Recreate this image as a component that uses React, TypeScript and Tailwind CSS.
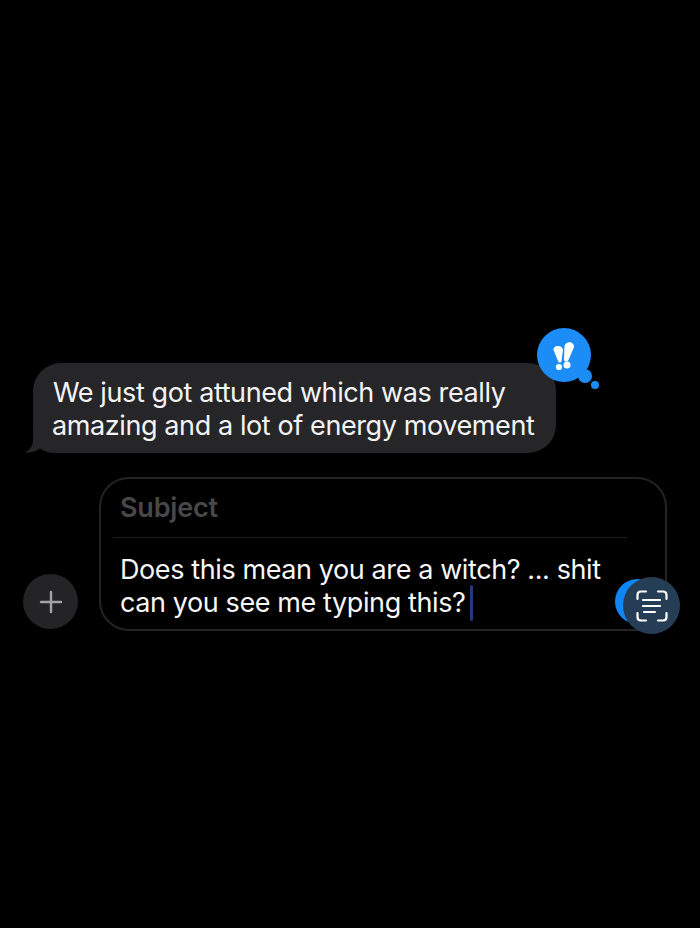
export default function App() {
  return (
    <div className="min-h-[928px] w-[700px] bg-black pt-[363px] text-white" style={{ fontFamily: "Inter, 'Noto Sans', sans-serif" }}>
      <div className="relative ml-[33px] h-[90px] w-[523px] rounded-[28px] bg-[#262629] pl-[20px] pt-[12.500px] text-[27px] leading-[33px] tracking-[-0.4px] text-[#f4f4f5]">
        <svg className="absolute left-[-8px] top-[66px]" width="34" height="24" viewBox="0 0 34 24">
          <path d="M8 0 L8 11 C8 17 5 21 0 23.500 C5 24.500 11 22 15 19.500 C19 22 24 24 30 24 L34 24 L34 0 Z" fill="#262629" />
        </svg>
        <div className="relative whitespace-nowrap">We just got attuned which was really</div>
        <div className="relative -ml-px whitespace-nowrap">amazing and a lot of energy movement</div>
        <div className="absolute left-[504px] top-[-35px] h-[54px] w-[54px] rounded-full bg-[#1c8cf7]">
          <svg width="54" height="54" viewBox="0 0 54 54" className="absolute left-0 top-0">
            <g fill="#fff">
              <path d="M16.500 22 C16 17 25.500 16.500 26 22 L24.500 33 C24 35 21.500 35 21 33 Z" />
              <circle cx="22" cy="39" r="3.100" />
              <path d="M27.500 18 C28.500 12.500 37.500 13 37 19 L31.500 32 C30.500 34.500 27 34 27 31.500 Z" />
              <circle cx="30" cy="37" r="3.500" />
            </g>
          </svg>
        </div>
        <div className="absolute left-[545px] top-[6px] h-[14px] w-[14px] rounded-full bg-[#1c8cf7]" />
        <div className="absolute left-[558px] top-[18px] h-[8px] w-[8px] rounded-full bg-[#1c8cf7]" />
      </div>
      <div className="ml-[23px] mt-[24px] flex items-end gap-[21px]">
        <div className="mb-[2px] flex h-[55px] w-[55px] items-center justify-center rounded-full bg-[#242426]">
          <svg width="24" height="24" viewBox="0 0 24 24" fill="none" stroke="#a3a3a6" strokeWidth="2.400" strokeLinecap="round">
            <path d="M12 2 V22 M2 12 H22" />
          </svg>
        </div>
        <div className="relative h-[154px] w-[568px] rounded-[30px] border-2 border-[#232325]">
          <div className="ml-[12px] mr-[38px] h-[59px] border-b border-[#1e1e20] pl-[7px] pt-[12px] text-[27px] font-semibold leading-[33px] tracking-[-0.2px] text-[#48484a]">Subject</div>
          <div className="pl-[19px] pt-[15px] text-[27px] leading-[33px] tracking-[-0.4px] text-[#f7f7f7]">
            <div className="whitespace-nowrap">Does this mean you are a witch? ... shit</div>
            <div className="flex h-[33px] items-center whitespace-nowrap">
              can you see me typing this?
              <span className="ml-[5px] h-[36px] w-[3px] shrink-0 rounded-full bg-[#25397f]" />
            </div>
          </div>
          <div className="absolute left-[514px] top-[100px] h-[45px] w-[45px] rounded-full bg-[#0f86f5]" />
          <div className="absolute left-[522px] top-[98px] flex h-[57px] w-[57px] items-center justify-center rounded-full bg-[#253d55]">
            <svg width="32" height="32" viewBox="0 0 32 32" fill="none" stroke="#fff" strokeWidth="2.200" strokeLinecap="round" strokeLinejoin="round">
              <path d="M1.500 9 V5 C1.500 2.500 3 1.500 5 1.500 H10 M22 1.500 H27 C29 1.500 30.500 2.500 30.500 5 V9 M1.500 23 V27 C1.500 29.500 3 30.500 5 30.500 H10 M22 30.500 H27 C29 30.500 30.500 29.500 30.500 27 V23" />
              <path d="M7 10 H24 M7 16 H24 M8 22 H19" />
            </svg>
          </div>
        </div>
      </div>
    </div>
  );
}
